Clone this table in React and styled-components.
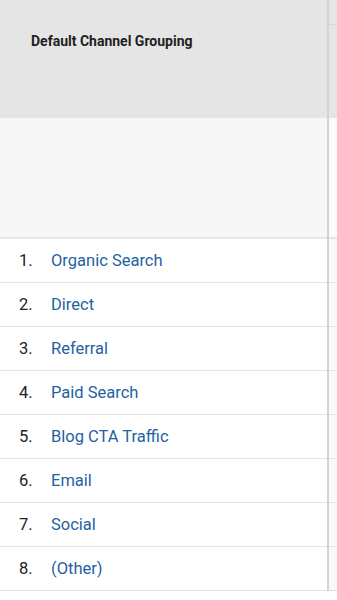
import React from "react";
import styled, { createGlobalStyle } from "styled-components";

const GlobalStyle = createGlobalStyle`
  body {
    margin: 0;
    background: #ffffff;
    font-family: Roboto, "Liberation Sans", sans-serif;
  }
`;

const Table = styled.div`
  width: 337px;
  display: grid;
  grid-template-columns: 327px 2px 8px;
`;

const HeadCell = styled.div`
  height: 118px;
  background: #e5e5e5;
  display: flex;
  align-items: flex-start;
  padding: 33px 0 0 31px;
  box-sizing: border-box;
  font-size: 14px;
  font-weight: 700;
  color: #1e1e1e;
`;

const HeadSide = styled.div`
  height: 118px;
  background: #e5e5e5;
  border-top: 24px solid #e5e5e5;
  box-sizing: border-box;

  &::before {
    content: "";
    display: block;
    height: 1px;
    background: #d6d6d6;
  }
`;

const Divider = styled.div`
  background: #d3d3d3;
  grid-row: span ${p => p.$span};
`;

const Spacer = styled.div`
  height: 119px;
  background: ${p => (p.$side ? "#fbfbfb" : "#f7f7f7")};
  border-bottom: 2px solid #e6e6e6;
`;

const Cell = styled.div`
  height: 43px;
  display: flex;
  align-items: center;
  background: ${p => (p.$side ? "#f9f9f9" : "#ffffff")};
  border-bottom: 1px solid #e4e4e4;
  font-size: 16.5px;
`;

const Num = styled.span`
  width: 32px;
  padding-left: 19px;
  color: #222222;
`;

const Link = styled.a`
  color: #1f62a2;
  text-decoration: none;
`;

const channels = [
  "Organic Search",
  "Direct",
  "Referral",
  "Paid Search",
  "Blog CTA Traffic",
  "Email",
  "Social",
  "(Other)"
];

export default function App() {
  return (
    <>
      <GlobalStyle />
      <Table>
        <HeadCell>Default Channel Grouping</HeadCell>
        <Divider $span={10} />
        <HeadSide />
        <Spacer />
        <Spacer $side />
        {channels.map((name, i) => (
          <React.Fragment key={name}>
            <Cell>
              <Num>{i + 1}.</Num>
              <Link href="#">{name}</Link>
            </Cell>
            <Cell $side />
          </React.Fragment>
        ))}
      </Table>
    </>
  );
}
